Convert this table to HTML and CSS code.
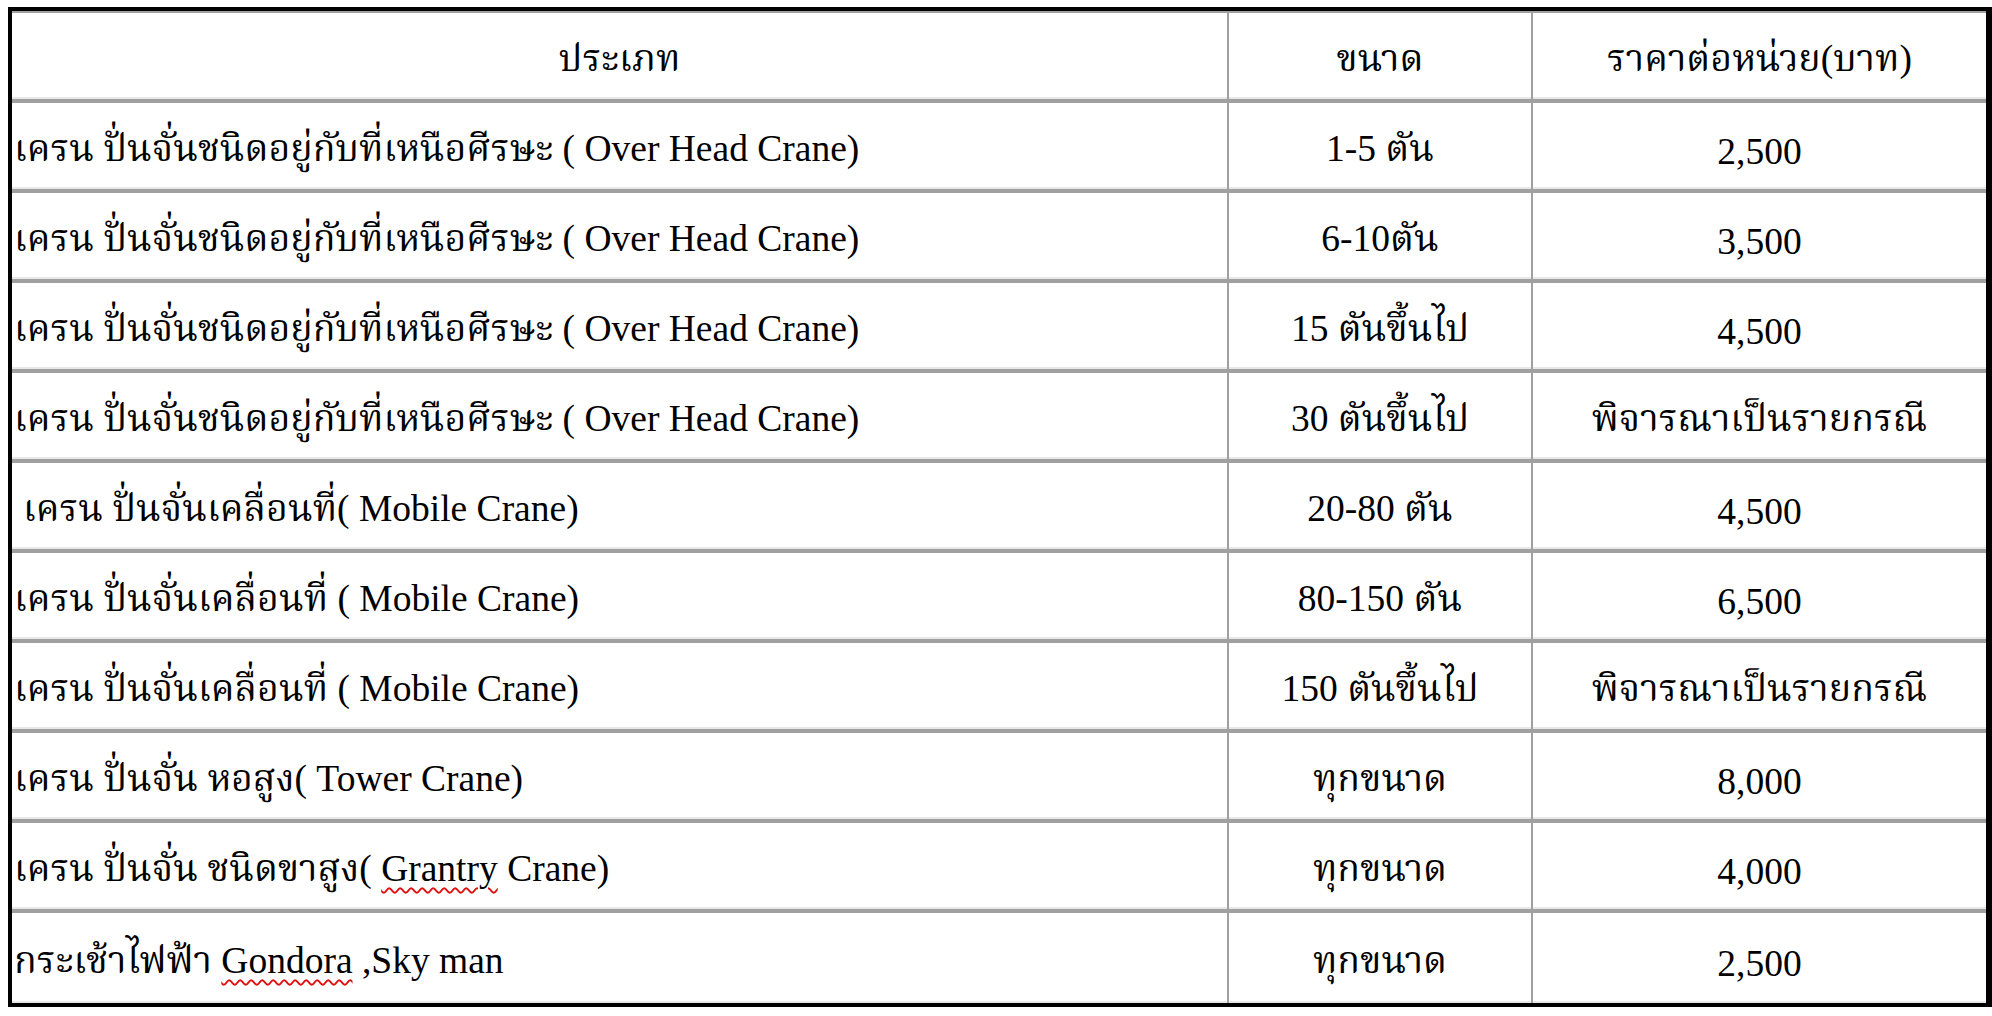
FILE: index.html
```html
<!DOCTYPE html>
<html lang="th">
<head>
<meta charset="utf-8">
<title>ราคาเครน</title>
<link rel="stylesheet" href="styles.css">
</head>
<body>
<table class="price">
  <colgroup>
    <col class="c-type">
    <col class="c-size">
    <col class="c-price">
  </colgroup>
  <thead>
    <tr>
      <th class="center">ประเภท</th>
      <th class="center">ขนาด</th>
      <th class="center">ราคาต่อหน่วย(บาท)</th>
    </tr>
  </thead>
  <tbody>
    <tr><td>เครน ปั่นจั่นชนิดอยู่กับที่เหนือศีรษะ ( Over Head Crane)</td><td class="center">1-5 ตัน</td><td class="center">2,500</td></tr>
    <tr><td>เครน ปั่นจั่นชนิดอยู่กับที่เหนือศีรษะ ( Over Head Crane)</td><td class="center">6-10ตัน</td><td class="center">3,500</td></tr>
    <tr><td>เครน ปั่นจั่นชนิดอยู่กับที่เหนือศีรษะ ( Over Head Crane)</td><td class="center">15 ตันขึ้นไป</td><td class="center">4,500</td></tr>
    <tr><td>เครน ปั่นจั่นชนิดอยู่กับที่เหนือศีรษะ ( Over Head Crane)</td><td class="center">30 ตันขึ้นไป</td><td class="center">พิจารณาเป็นรายกรณี</td></tr>
    <tr><td class="indent">เครน ปั่นจั่นเคลื่อนที่( Mobile Crane)</td><td class="center">20-80 ตัน</td><td class="center">4,500</td></tr>
    <tr><td>เครน ปั่นจั่นเคลื่อนที่ ( Mobile Crane)</td><td class="center">80-150 ตัน</td><td class="center">6,500</td></tr>
    <tr><td>เครน ปั่นจั่นเคลื่อนที่ ( Mobile Crane)</td><td class="center">150 ตันขึ้นไป</td><td class="center">พิจารณาเป็นรายกรณี</td></tr>
    <tr><td>เครน ปั่นจั่น หอสูง( Tower Crane)</td><td class="center">ทุกขนาด</td><td class="center">8,000</td></tr>
    <tr><td>เครน ปั่นจั่น ชนิดขาสูง( <span class="spell">Grantry</span> Crane)</td><td class="center">ทุกขนาด</td><td class="center">4,000</td></tr>
    <tr><td>กระเช้าไฟฟ้า <span class="spell">Gondora</span> ,Sky man</td><td class="center">ทุกขนาด</td><td class="center">2,500</td></tr>
  </tbody>
</table>
</body>
</html>
```
FILE: styles.css
```css
html, body {
  margin: 0;
  padding: 0;
  background: #ffffff;
}

body {
  width: 1992px;
  height: 1016px;
  overflow: hidden;
  font-family: "Liberation Serif", "Noto Serif Thai", "Noto Sans Thai", "Tlwg Typo", "Loma", serif;
  color: #000000;
}

.price {
  margin: 7px 0 0 8px;
  width: 1984px;
  table-layout: fixed;
  border-collapse: separate;
  border-spacing: 0;
  border-top: 4px solid #000;
  border-left: 4px solid #000;
  border-bottom: 4px solid #000;
  border-right: 6px solid #000;
  font-size: 37.5px;
}

.c-type { width: 1217px; }
.c-size { width: 304px; }
.c-price { width: auto; }

.price th,
.price td {
  font-weight: normal;
  padding: 10px 0 0 2px;
  height: 76px;
  vertical-align: middle;
  text-align: left;
  white-space: nowrap;
  border-bottom: 4px solid #a0a0a0;
  border-right: 2px solid #a0a0a0;
  box-shadow: inset 0 -2px 0 #e8e8e8;
}

.price th {
  border-top: 2px solid #a0a0a0;
  height: 76px;
  padding-top: 10px;
}

.price th:last-child,
.price td:last-child {
  border-right: none;
}

.price tbody tr:last-child td {
  border-bottom: none;
  height: 80px;
}

.price .center {
  text-align: center;
  padding-left: 0;
}

.price .indent {
  padding-left: 11px;
}

.spell {
  text-decoration: underline wavy #e01010;
  text-decoration-thickness: 1.5px;
  text-underline-offset: 6px;
}
```
